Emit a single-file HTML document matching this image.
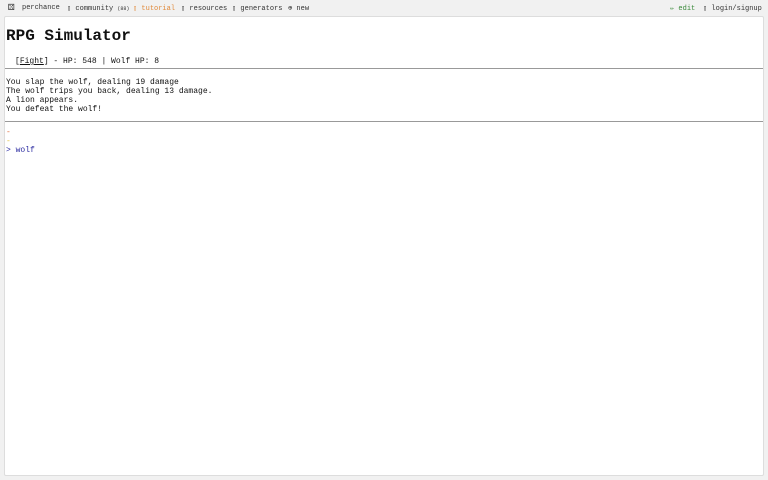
<!DOCTYPE html>
<html><head><style>
body{margin:0;width:768px;height:480px;background:#f1f1f1;font-family:"Liberation Mono",monospace;overflow:hidden;position:relative}
.nav{position:absolute;top:0;left:0;width:768px;height:16px;font-size:7px;color:#333}
.nav span{position:absolute;top:4px;white-space:nowrap}
.panel{position:absolute;left:4px;top:16px;width:758px;height:458px;background:#fff;border:1px solid #ddd;border-radius:2px}
.t{position:absolute;left:1px;white-space:pre;font-size:8px;line-height:9px;color:#111}
hr{position:absolute;left:0;width:758px;margin:0;border:0;border-top:1px solid #999}
</style></head><body>
<div class="nav">
<span style="left:8px;font-size:11px;top:0px">⚄</span>
<span style="left:22px">perchance</span>
<span style="left:67px">▯ community <small style="font-size:5px">(88)</small></span>
<span style="left:133px;color:#e08a3c">▯ tutorial</span>
<span style="left:181px">▯ resources</span>
<span style="left:232px">▯ generators</span>
<span style="left:288px">⊕ new</span>
<span style="left:670px;color:#3a8a3a">✏ edit</span>
<span style="left:703px">▯ login/signup</span>
</div>
<div class="panel">
<div class="t" style="top:9px;font-size:16px;line-height:20px;font-weight:bold">RPG Simulator</div>
<div class="t" style="top:40px;left:10px">[<u>Fight</u>] - HP: 548 | Wolf HP: 8</div>
<hr style="top:51px">
<div class="t" style="top:61px">You slap the wolf, dealing 19 damage
The wolf trips you back, dealing 13 damage.
A lion appears.
You defeat the wolf!</div>
<hr style="top:104px">
<div class="t" style="top:111px;color:#e06a3a">-</div>
<div class="t" style="top:120px;color:#e0c040">-</div>
<div class="t" style="top:129px;color:#2a2aa0">&gt; wolf</div>
</div>
</body></html>
